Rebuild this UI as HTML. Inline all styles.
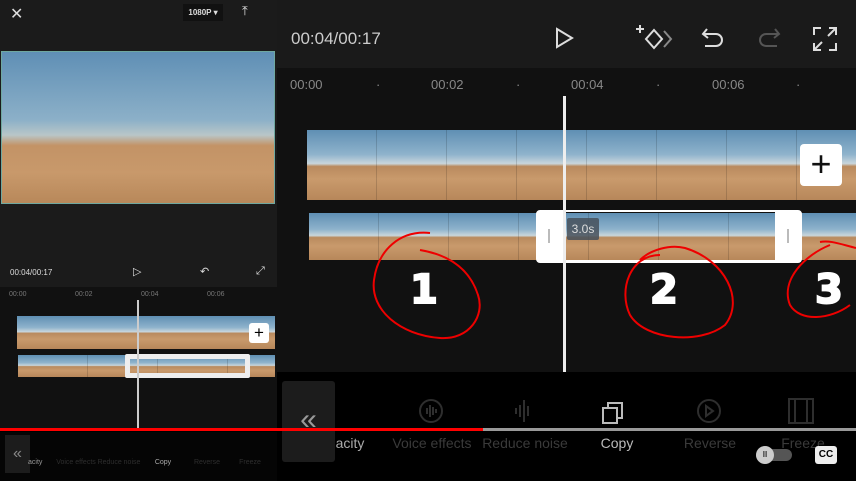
<!DOCTYPE html>
<html><head><meta charset="utf-8"><style>
*{margin:0;padding:0;box-sizing:border-box}
body{width:856px;height:481px;overflow:hidden;background:#000;font-family:"Liberation Sans",sans-serif;position:relative}
.a{position:absolute}
.th2{background:repeating-linear-gradient(90deg,transparent 0 69px,rgba(0,0,0,.15) 69px 70px),linear-gradient(180deg,#5f8fb3 0%,#8fb3cc 35%,#c9d6dc 48%,#b98a5e 52%,#c99a6c 70%,#b7875a 100%)}
.lbl{color:#3a3a3a;font-size:14px;text-align:center;width:100px}
.sl{color:#2e2e2e;font-size:7px;text-align:center;width:50px;top:459px}
</style></head><body>
<div class="a" style="left:0;top:0;width:277px;height:428px;background:#1b1b1b"></div>
<div class="a" style="left:10px;top:4px;color:#ddd;font-size:16px">✕</div>
<div class="a" style="left:183px;top:4px;width:40px;height:17px;background:#111;color:#ddd;font-size:8px;font-weight:bold;line-height:17px;text-align:center">1080P ▾</div>
<div class="a" style="left:242px;top:3px;color:#ddd;font-size:13px">⤒</div>
<div class="a" style="left:1px;top:51px;width:274px;height:153px;border:1px solid #6fa8a0;background:linear-gradient(180deg,#5f8fb5 0%,#8cb0c8 45%,#b9c6c8 55%,#c39366 62%,#c8996b 80%,#b8885a 100%)"></div>
<div class="a" style="left:10px;top:268px;color:#ddd;font-size:8px">00:04/00:17</div>
<div class="a" style="left:133px;top:265px;color:#ddd;font-size:11px">▷</div>
<div class="a" style="left:200px;top:265px;color:#ddd;font-size:11px">↶</div>
<div class="a" style="left:256px;top:265px;color:#ddd;font-size:11px">⤢</div>
<div class="a" style="left:0;top:287px;width:277px;height:141px;background:#111"></div>
<div class="a" style="left:9px;top:291px;color:#777;font-size:7px">00:00</div>
<div class="a" style="left:75px;top:291px;color:#777;font-size:7px">00:02</div>
<div class="a" style="left:141px;top:291px;color:#777;font-size:7px">00:04</div>
<div class="a" style="left:207px;top:291px;color:#777;font-size:7px">00:06</div>
<div class="a th2" style="left:17px;top:316px;width:258px;height:33px;background-size:33px 100%,auto"></div>
<div class="a" style="left:249px;top:323px;width:20px;height:20px;background:#fff;border-radius:3px;text-align:center;font-size:17px;line-height:20px">+</div>
<div class="a th2" style="left:18px;top:355px;width:257px;height:22px"></div>
<div class="a" style="left:125px;top:354px;width:125px;height:24px;border:5px solid #eee;border-radius:2px"></div>
<div class="a" style="left:137px;top:300px;width:2px;height:128px;background:#ccc"></div>
<div class="a" style="left:0;top:432px;width:277px;height:49px;background:#050505"></div>
<div class="a" style="left:5px;top:435px;width:25px;height:38px;background:#1c1c1c;color:#888;font-size:16px;text-align:center;line-height:38px">«</div>
<div class="a" style="left:28px;top:459px;color:#999;font-size:7px">acity</div>
<div class="a sl" style="left:51px">Voice effects</div>
<div class="a sl" style="left:94px">Reduce noise</div>
<div class="a sl" style="left:138px;color:#aaa">Copy</div>
<div class="a sl" style="left:182px">Reverse</div>
<div class="a sl" style="left:225px">Freeze</div>
<div class="a" style="left:277px;top:0;width:579px;height:68px;background:#1a1a1a"></div>
<div class="a" style="left:291px;top:29px;color:#ccc;font-size:17px">00:04/00:17</div>
<svg class="a" style="left:552px;top:26px" width="24" height="24"><path d="M5 3 L20 12 L5 21 Z" fill="none" stroke="#ddd" stroke-width="2"/></svg>
<svg class="a" style="left:636px;top:22px" width="40" height="32"><path d="M4 3v8M0 7h8" stroke="#ddd" stroke-width="2"/><path d="M18 8 L26 17 L18 26 L10 17 Z" fill="none" stroke="#ddd" stroke-width="2"/><path d="M28 9 L35 17 L28 25" fill="none" stroke="#888" stroke-width="2"/></svg>
<svg class="a" style="left:700px;top:26px" width="26" height="26"><path d="M7 3 L3 8 L8 12 M3 8 H16 A6 6 0 0 1 16 20 H5" fill="none" stroke="#ddd" stroke-width="2"/></svg>
<svg class="a" style="left:756px;top:26px" width="26" height="26"><path d="M19 3 L23 8 L18 12 M23 8 H10 A6 6 0 0 0 10 20 H21" fill="none" stroke="#555" stroke-width="2"/></svg>
<svg class="a" style="left:812px;top:26px" width="26" height="26"><path d="M2 9V2h7M17 2h7v7M24 17v7h-7M9 24H2v-7M16 10l7-7M10 16l-7 7" fill="none" stroke="#ddd" stroke-width="2"/></svg>
<div class="a" style="left:277px;top:68px;width:579px;height:304px;background:#111"></div>
<div class="a" style="left:290px;top:77px;color:#888;font-size:13px">00:00</div>
<div class="a" style="left:431px;top:77px;color:#888;font-size:13px">00:02</div>
<div class="a" style="left:571px;top:77px;color:#888;font-size:13px">00:04</div>
<div class="a" style="left:712px;top:77px;color:#888;font-size:13px">00:06</div>
<div class="a" style="left:376px;top:77px;color:#888;font-size:13px">·</div>
<div class="a" style="left:516px;top:77px;color:#888;font-size:13px">·</div>
<div class="a" style="left:656px;top:77px;color:#888;font-size:13px">·</div>
<div class="a" style="left:796px;top:77px;color:#888;font-size:13px">·</div>
<div class="a th2" style="left:307px;top:130px;width:549px;height:70px"></div>
<div class="a" style="left:800px;top:144px;width:42px;height:42px;background:#fff;border-radius:4px;text-align:center;font-size:36px;line-height:40px;color:#111">+</div>
<div class="a th2" style="left:309px;top:213px;width:547px;height:47px"></div>
<div class="a" style="left:536px;top:210px;width:266px;height:53px;border:solid #fff;border-width:2px 27px 3px 27px;border-radius:4px"></div>
<div class="a" style="left:548px;top:229px;width:2px;height:14px;background:#bbb"></div>
<div class="a" style="left:787px;top:229px;width:2px;height:14px;background:#bbb"></div>
<div class="a" style="left:567px;top:218px;width:32px;height:22px;background:rgba(70,80,90,.85);border-radius:2px;color:#ddd;font-size:12px;line-height:22px;text-align:center">3.0s</div>
<div class="a" style="left:563px;top:96px;width:3px;height:276px;background:#eee"></div>
<svg class="a" style="left:360px;top:230px" width="496" height="120">
<g fill="none" stroke="#e00" stroke-width="2">
<path d="M70 3 C40 0 18 20 14 50 C10 80 40 105 80 108 C110 110 125 85 118 65 C110 40 90 25 60 20"/>
<path d="M300 25 C270 25 258 60 270 85 C285 110 340 115 365 95 C385 70 365 30 325 18 C310 14 290 20 280 30"/>
<path d="M470 15 C445 25 420 50 430 75 C440 92 470 90 490 75 M460 12 C470 10 480 14 496 18"/>
</g>
<g fill="#fff" stroke="#fff" stroke-width="2" font-size="40" font-weight="bold" font-family="DejaVu Sans">
<text x="50" y="73">1</text>
<text x="290" y="73">2</text>
<text x="455" y="73">3</text></g>
</svg>
<div class="a" style="left:282px;top:381px;width:53px;height:81px;background:#1c1c1c;border-radius:3px;color:#999;font-size:30px;text-align:center;line-height:78px">«</div>
<div class="a lbl" style="left:300px;top:435px;color:#aaa">acity</div>
<div class="a lbl" style="left:382px;top:435px">Voice effects</div>
<div class="a lbl" style="left:475px;top:435px">Reduce noise</div>
<div class="a lbl" style="left:567px;top:435px;color:#bbb">Copy</div>
<div class="a lbl" style="left:660px;top:435px">Reverse</div>
<div class="a lbl" style="left:753px;top:435px">Freeze</div>
<svg class="a" style="left:600px;top:400px" width="28" height="28"><rect x="3" y="8" width="14" height="15" fill="none" stroke="#bbb" stroke-width="2"/><path d="M8 8V3h14v15h-5" fill="none" stroke="#bbb" stroke-width="2"/></svg>
<svg class="a" style="left:416px;top:396px" width="30" height="30"><circle cx="15" cy="15" r="11" fill="none" stroke="#2e2e2e" stroke-width="2"/><path d="M11 12v6M14 9v12M17 11v8M20 13v4" stroke="#2e2e2e" stroke-width="2"/></svg>
<svg class="a" style="left:508px;top:396px" width="30" height="30"><path d="M8 12v6M12 9v12M16 4v22M20 10v10" stroke="#2e2e2e" stroke-width="2"/></svg>
<svg class="a" style="left:694px;top:396px" width="30" height="30"><circle cx="15" cy="15" r="11" fill="none" stroke="#2e2e2e" stroke-width="2"/><path d="M12 10l7 5-7 5z" fill="none" stroke="#2e2e2e" stroke-width="2"/></svg>
<svg class="a" style="left:786px;top:396px" width="30" height="30"><rect x="3" y="3" width="24" height="24" fill="none" stroke="#2e2e2e" stroke-width="2"/><path d="M9 3v24M21 3v24" stroke="#2e2e2e" stroke-width="2"/></svg>
<div class="a" style="left:0;top:428px;width:856px;height:3px;background:#999"></div>
<div class="a" style="left:0;top:428px;width:483px;height:3px;background:#f00"></div>
<div class="a" style="left:756px;top:449px;width:36px;height:12px;background:#555;border-radius:6px"></div>
<div class="a" style="left:756px;top:446px;width:18px;height:18px;background:#ccc;border-radius:9px;font-size:8px;text-align:center;line-height:18px;color:#333;font-weight:bold">II</div>
<div class="a" style="left:815px;top:446px;width:22px;height:18px;background:#eee;border-radius:3px;font-size:10px;text-align:center;line-height:18px;color:#000;font-weight:bold">CC</div>
</body></html>
